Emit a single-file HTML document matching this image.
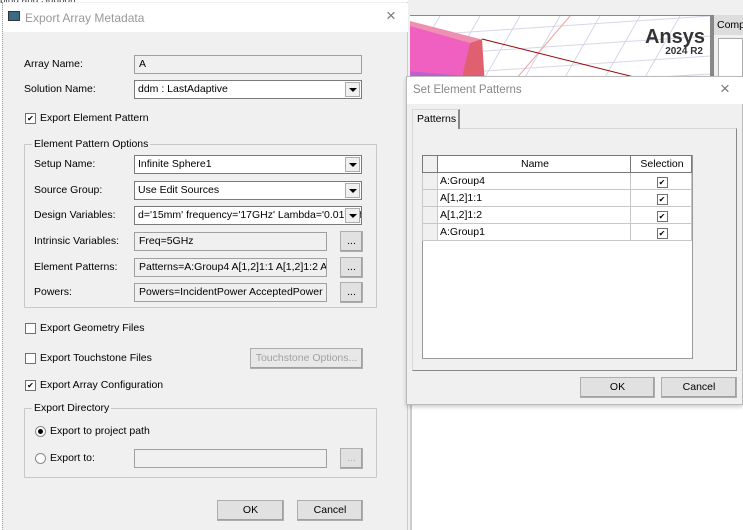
<!DOCTYPE html>
<html><head><meta charset="utf-8"><style>
*{box-sizing:border-box;margin:0;padding:0}
body{width:743px;height:530px;overflow:hidden;background:#fff;font-family:"Liberation Sans",sans-serif;font-size:11px;color:#000;position:relative}
.a{position:absolute}
.lbl{position:absolute;font-size:10.5px;line-height:12px;white-space:nowrap}
.fld{position:absolute;height:19px;border:1px solid #a0a0a0;background:#f0f0f0;font-size:10.5px;line-height:17px;padding-left:4px;white-space:nowrap;overflow:hidden}
.cmb{position:absolute;height:19px;border:1px solid #7a7a7a;background:#fff;font-size:10.5px;line-height:17px;padding-left:3px;white-space:nowrap;overflow:hidden}
.cmb .arr{position:absolute;right:1px;top:1px;width:15px;height:15px;background:#f0f0f0;border:1px solid #adadad}
.cmb .arr:after{content:"";position:absolute;left:3px;top:5px;border-left:4px solid transparent;border-right:4px solid transparent;border-top:4px solid #000}
.btn{position:absolute;border:1px solid #adadad;background:#e1e1e1;text-align:center;font-size:10.5px;box-shadow:inset -1px -1px 0 #a0a0a0}
.chk{position:absolute;width:11px;height:11px;border:1px solid #707070;background:#fff;font-size:8px;line-height:9px;text-align:center}
.grp{position:absolute;border:1px solid #c8c8c8;border-radius:1px}
.grp span{position:absolute;top:-7px;left:7px;background:#f0f0f0;padding:0 2px;font-size:10.5px;line-height:12px}
.radio{position:absolute;width:11px;height:11px;border-radius:50%;border:1px solid #8a8a8a;background:#fff}
td{border:1px solid #c8c8c8;height:17px;font-size:10.5px;padding-left:2px}
</style></head><body>
<div class="a" style="left:408px;top:0;width:335px;height:530px;background:#f0f0f0"></div>
<div class="a" style="left:410px;top:15px;width:300px;height:70px;background:#fff;border-top:1px solid #888;overflow:hidden">
<svg width="300" height="70">
<g stroke="#d6d6ea" stroke-width="1">
<line x1="0" y1="20" x2="300" y2="0"/><line x1="0" y1="40" x2="300" y2="20"/><line x1="0" y1="60" x2="300" y2="40"/><line x1="100" y1="70" x2="300" y2="58"/>
<line x1="30" y1="0" x2="0" y2="50"/><line x1="70" y1="0" x2="30" y2="70"/><line x1="110" y1="0" x2="70" y2="70"/><line x1="150" y1="0" x2="110" y2="70"/><line x1="190" y1="0" x2="150" y2="70"/><line x1="230" y1="0" x2="190" y2="70"/><line x1="270" y1="0" x2="230" y2="70"/>
</g>
<line x1="160" y1="0" x2="100" y2="70" stroke="#f0a0a0"/>
<polygon points="0,5 70,23 75,70 0,70" fill="#f090b0"/>
<polygon points="0,10 60,27 55,60 0,55" fill="#f060c0"/>
<polygon points="0,55 55,60 55,70 0,70" fill="#c060d0"/>
<polygon points="60,27 72,23 75,70 50,70" fill="#e06070"/>
<line x1="72" y1="23" x2="300" y2="80" stroke="#900" stroke-width="1"/>
<text x="295" y="27" text-anchor="end" font-family="Liberation Sans" font-weight="bold" font-size="20" fill="#333">Ansys</text>
<text x="293" y="38" text-anchor="end" font-family="Liberation Sans" font-weight="bold" font-size="10" fill="#333">2024 R2</text>
</svg></div>
<div class="a" style="left:710px;top:15px;width:4px;height:65px;background:#888"></div>
<div class="a" style="left:714px;top:15px;width:29px;height:20px;background:#ddd;font-size:10.5px;padding:4px 0 0 3px">Comp</div>
<div class="a" style="left:718px;top:38px;width:25px;height:50px;background:#fff;border:1px solid #aaa"></div>
<div class="a" style="left:0;top:0;width:270px;height:3px;font-size:10px;line-height:2px;color:#444;overflow:hidden">ping and Support</div>
<div class="a" style="left:410px;top:400px;width:2px;height:130px;background:#ccc"></div>
<div class="a" style="left:412px;top:404px;width:331px;height:126px;background:#fff"></div>

<div class="a" style="left:2px;top:2px;width:406px;height:528px;background:#f0f0f0;border-left:1px dotted #999;border-right:1px solid #ccc"></div>
<div class="a" style="left:3px;top:3px;width:405px;height:29px;background:#fff"></div>
<div class="a" style="left:8px;top:11px;width:12px;height:10px;background:#3a6a8a;border:1px solid #333"></div>
<div class="lbl" style="left:25px;top:11px;font-size:12px;line-height:14px;color:#999">Export Array Metadata</div>
<div class="lbl" style="left:386px;top:7px;font-size:17px;line-height:18px;color:#777">×</div>

<div class="lbl" style="left:24px;top:58px">Array Name:</div>
<div class="fld" style="left:134px;top:55px;width:228px">A</div>
<div class="lbl" style="left:24px;top:83px">Solution Name:</div>
<div class="cmb" style="left:134px;top:80px;width:228px">ddm : LastAdaptive<div class="arr"></div></div>
<div class="chk" style="left:25px;top:113px">✔</div>
<div class="lbl" style="left:40px;top:112px">Export Element Pattern</div>

<div class="grp" style="left:24px;top:144px;width:353px;height:164px"><span>Element Pattern Options</span></div>
<div class="lbl" style="left:34px;top:158px">Setup Name:</div>
<div class="cmb" style="left:134px;top:155px;width:228px">Infinite Sphere1<div class="arr"></div></div>
<div class="lbl" style="left:34px;top:184px">Source Group:</div>
<div class="cmb" style="left:134px;top:181px;width:228px">Use Edit Sources<div class="arr"></div></div>
<div class="lbl" style="left:34px;top:209px">Design Variables:</div>
<div class="cmb" style="left:134px;top:206px;width:228px">d='15mm' frequency='17GHz' Lambda='0.01763<div class="arr"></div></div>
<div class="lbl" style="left:34px;top:235px">Intrinsic Variables:</div>
<div class="fld" style="left:134px;top:232px;width:193px">Freq=5GHz</div>
<div class="btn" style="left:340px;top:231px;width:23px;height:21px;line-height:19px">...</div>
<div class="lbl" style="left:34px;top:261px">Element Patterns:</div>
<div class="fld" style="left:134px;top:258px;width:193px">Patterns=A:Group4 A[1,2]1:1 A[1,2]1:2 A:G</div>
<div class="btn" style="left:340px;top:257px;width:23px;height:21px;line-height:19px">...</div>
<div class="lbl" style="left:34px;top:286px">Powers:</div>
<div class="fld" style="left:134px;top:283px;width:193px">Powers=IncidentPower AcceptedPower</div>
<div class="btn" style="left:340px;top:282px;width:23px;height:21px;line-height:19px">...</div>

<div class="chk" style="left:25px;top:323px"></div>
<div class="lbl" style="left:40px;top:322px">Export Geometry Files</div>
<div class="chk" style="left:25px;top:353px"></div>
<div class="lbl" style="left:40px;top:352px">Export Touchstone Files</div>
<div class="btn" style="left:250px;top:348px;width:113px;height:21px;line-height:19px;color:#a0a0a0;background:#e8e8e8">Touchstone Options...</div>
<div class="chk" style="left:25px;top:380px">✔</div>
<div class="lbl" style="left:40px;top:379px">Export Array Configuration</div>

<div class="grp" style="left:24px;top:408px;width:353px;height:70px"><span>Export Directory</span></div>
<div class="radio" style="left:35px;top:426px"><div class="a" style="left:2px;top:2px;width:5px;height:5px;border-radius:50%;background:#000"></div></div>
<div class="lbl" style="left:50px;top:425px">Export to project path</div>
<div class="radio" style="left:35px;top:453px"></div>
<div class="lbl" style="left:50px;top:452px">Export to:</div>
<div class="fld" style="left:134px;top:449px;width:193px"></div>
<div class="btn" style="left:340px;top:448px;width:23px;height:21px;line-height:19px;color:#aaa">...</div>

<div class="btn" style="left:217px;top:500px;width:67px;height:21px;line-height:19px">OK</div>
<div class="btn" style="left:297px;top:500px;width:66px;height:21px;line-height:19px">Cancel</div>

<div class="a" style="left:406px;top:76px;width:337px;height:329px;background:#f0f0f0;border:1px solid #bbb;box-shadow:0 2px 4px rgba(0,0,0,.2)"></div>
<div class="a" style="left:407px;top:77px;width:336px;height:27px;background:#fff"></div>
<div class="lbl" style="left:413px;top:84px;font-size:11.5px;line-height:13px;color:#888">Set Element Patterns</div>
<div class="lbl" style="left:720px;top:80px;font-size:17px;line-height:18px;color:#777">×</div>
<div class="a" style="left:412px;top:128px;width:325px;height:243px;border:1px solid #d8d8d8;border-right:1px solid #888;border-bottom:1px solid #888"></div>
<div class="a" style="left:412px;top:109px;width:48px;height:20px;background:#f0f0f0;border:1px solid #d8d8d8;border-right:2px solid #888;border-bottom:none;font-size:10.5px;line-height:18px;padding-left:4px">Patterns</div>
<div class="a" style="left:422px;top:155px;width:271px;height:204px;background:#fff;border:1px solid #999"></div>
<table class="a" style="left:422px;top:155px;border-collapse:collapse;background:#fff">
<tr><td style="width:15px;background:#f0f0f0;border:1px solid #777"></td><td style="width:193px;text-align:center;border:1px solid #777">Name</td><td style="width:61px;text-align:center;border:1px solid #777">Selection</td></tr>
<tr><td style="background:#f0f0f0"></td><td>A:Group4</td><td style="text-align:center"><div class="chk" style="position:relative;display:inline-block;top:1px">✔</div></td></tr>
<tr><td style="background:#f0f0f0"></td><td>A[1,2]1:1</td><td style="text-align:center"><div class="chk" style="position:relative;display:inline-block;top:1px">✔</div></td></tr>
<tr><td style="background:#f0f0f0"></td><td>A[1,2]1:2</td><td style="text-align:center"><div class="chk" style="position:relative;display:inline-block;top:1px">✔</div></td></tr>
<tr><td style="background:#f0f0f0"></td><td>A:Group1</td><td style="text-align:center"><div class="chk" style="position:relative;display:inline-block;top:1px">✔</div></td></tr>
</table>
<div class="btn" style="left:580px;top:377px;width:75px;height:21px;line-height:19px">OK</div>
<div class="btn" style="left:661px;top:377px;width:76px;height:21px;line-height:19px">Cancel</div>
</body></html>
